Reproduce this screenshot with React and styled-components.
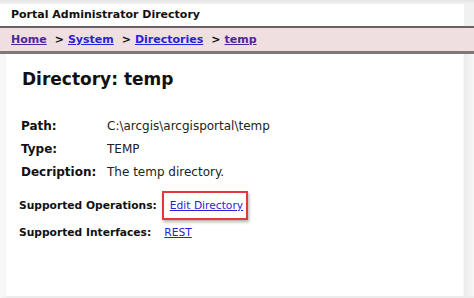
import React from 'react';
import styled, { createGlobalStyle } from 'styled-components';

const GlobalStyle = createGlobalStyle`
  html, body { margin: 0; padding: 0; background: #fff; }
  body { font-family: "DejaVu Sans", Verdana, sans-serif; }
`;

const crumbs = [
  { label: 'Home', visited: true },
  { label: 'System' },
  { label: 'Directories' },
  { label: 'temp', visited: true },
];

const fields = [
  { label: 'Path:', value: 'C:\\arcgis\\arcgisportal\\temp' },
  { label: 'Type:', value: 'TEMP' },
  { label: 'Decription:', value: 'The temp directory.' },
];

export default function App() {
  return (
    <Page>
      <GlobalStyle />
      <TopStrip />
      <Header>Portal Administrator Directory</Header>
      <Breadcrumb>
        {crumbs.map((c, i) => (
          <React.Fragment key={c.label}>
            {i > 0 && <Sep>&gt;</Sep>}
            <CrumbLink href="#" $visited={c.visited}>{c.label}</CrumbLink>
          </React.Fragment>
        ))}
      </Breadcrumb>
      <Body>
        <Title>Directory: temp</Title>
        <FieldTable>
          {fields.map(f => (
            <React.Fragment key={f.label}>
              <FieldLabel>{f.label}</FieldLabel>
              <FieldValue>{f.value}</FieldValue>
            </React.Fragment>
          ))}
        </FieldTable>
        <SupportRow $gap={13}>
          <SupportLabel>Supported Operations:</SupportLabel>
          <Highlight>
            <Link href="#">Edit Directory</Link>
          </Highlight>
        </SupportRow>
        <SupportRow $gap={13} $top={6}>
          <SupportLabel>Supported Interfaces:</SupportLabel>
          <Link href="#">REST</Link>
        </SupportRow>
      </Body>
    </Page>
  );
}

const Page = styled.div`
  width: 474px;
  height: 298px;
  display: flex;
  flex-direction: column;
  overflow: hidden;
  background: #fff;
`

const TopStrip = styled.div`
  height: 4px;
  background: linear-gradient(#e4e4e4, #f2f2f2);
`

const Header = styled.div`
  height: 22px;
  line-height: 22px;
  padding-left: 11px;
  font-size: 11px;
  font-weight: bold;
  color: #111;
  background: linear-gradient(to right, #fff 97.8%, #f1f1f1 98%);
`

const Breadcrumb = styled.div`
  height: 23px;
  display: flex;
  align-items: center;
  padding-left: 11px;
  background: #efdfe0;
  border-top: 2px solid #6b6262;
  border-bottom: 3px solid #81777a;
  font-size: 11px;
  font-weight: bold;
`

const CrumbLink = styled.a`
  color: ${p => (p.$visited ? '#50259a' : '#2a22d8')};
  text-decoration: underline;
`

const Sep = styled.span`
  color: #111;
  margin: 0 4px 0 8px;
`

const Body = styled.div`
  flex: 1;
  padding: 15px 0 0 15px;
  border-left: 6px solid #f7f7f7;
  border-bottom: 2px solid #ececec;
  background: linear-gradient(to right, #fff 97.6%, #ececec 98%, #f7f7f7);
  color: #111;
`

const Title = styled.h2`
  margin: 0 0 29px 1px;
  font-size: 17px;
  font-weight: bold;
  line-height: 20px;
`

const FieldTable = styled.div`
  display: grid;
  grid-template-columns: 86px auto;
  row-gap: 6px;
  font-size: 12px;
  line-height: 17px;
  margin-bottom: 10px;
`

const FieldLabel = styled.div`
  font-weight: bold;
`

const FieldValue = styled.div`
  color: #222;
`

const SupportRow = styled.div`
  display: flex;
  align-items: center;
  gap: ${p => p.$gap}px;
  margin-left: -2px;
  margin-top: ${p => p.$top || 0}px;
  font-size: 10.7px;
`

const SupportLabel = styled.span`
  font-weight: bold;
`

const Highlight = styled.span`
  display: inline-block;
  padding: 6px 3px 6px 6px;
  border: 2px solid #e23a3a;
  box-shadow: 1px 2px 3px rgba(0, 0, 0, 0.3);
  margin-left: -8px;
`

const Link = styled.a`
  color: #2a22d8;
  text-decoration: underline;
`
